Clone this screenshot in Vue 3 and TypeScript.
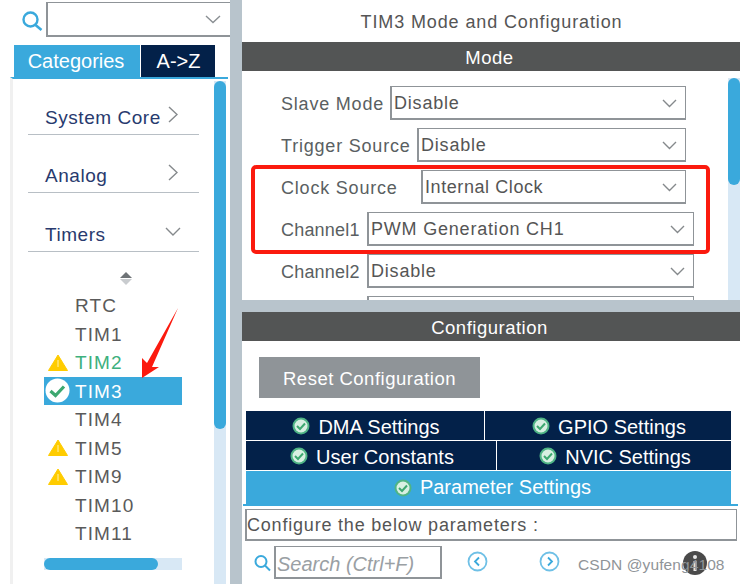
<script setup lang="ts">
interface Item { name: string; icon?: 'warn' | 'check'; cls?: string }
const cats = [
  { name: 'System Core', open: false },
  { name: 'Analog', open: false },
  { name: 'Timers', open: true },
]
const items: Item[] = [
  { name: 'RTC' },
  { name: 'TIM1' },
  { name: 'TIM2', icon: 'warn', cls: 'green' },
  { name: 'TIM3', icon: 'check', cls: 'picked' },
  { name: 'TIM4' },
  { name: 'TIM5', icon: 'warn' },
  { name: 'TIM9', icon: 'warn' },
  { name: 'TIM10' },
  { name: 'TIM11' },
]
const rows = [
  { label: 'Slave Mode', value: 'Disable', cls: 'r-slave' },
  { label: 'Trigger Source', value: 'Disable', cls: 'r-trig' },
  { label: 'Clock Source', value: 'Internal Clock', cls: 'r-clock' },
  { label: 'Channel1', value: 'PWM Generation CH1', cls: 'r-ch' },
  { label: 'Channel2', value: 'Disable', cls: 'r-ch' },
  { label: '', value: '', cls: 'r-ch' },
]
</script>

<template>
  <div class="app">
    <aside class="left">
      <div class="searchbar">
        <svg class="lens" width="22" height="22" viewBox="0 0 22 22">
          <circle cx="9.5" cy="9.5" r="7" fill="none" stroke="#3aa9dc" stroke-width="2.4" />
          <path d="M14.5 15l6 5" stroke="#3aa9dc" stroke-width="2.6" fill="none" />
        </svg>
        <div class="combo">
          <svg width="16" height="9" viewBox="0 0 16 9"><path d="M1 1l7 6.500L15 1" fill="none" stroke="#8a8f93" stroke-width="1.4" /></svg>
        </div>
      </div>
      <div class="tabs">
        <div class="tab on">Categories</div>
        <div class="tab off">A-&gt;Z</div>
      </div>
      <div class="panel">
        <div class="panel-main">
          <div v-for="c in cats" :key="c.name" class="cat">
            <span>{{ c.name }}</span>
            <svg v-if="c.open" class="cat-down" width="16" height="10" viewBox="0 0 16 10"><path d="M1 1l7 7 7-7" fill="none" stroke="#85898c" stroke-width="1.4" /></svg>
            <svg v-else class="cat-right" width="10" height="17" viewBox="0 0 10 17"><path d="M1 1l8 7.500-8 7.500" fill="none" stroke="#85898c" stroke-width="1.4" /></svg>
          </div>
          <div class="updown"><i class="up"></i><i class="down"></i></div>
          <div class="list">
            <div v-for="it in items" :key="it.name" class="item" :class="it.cls">
              <span class="ic">
                <svg v-if="it.icon === 'warn'" width="20" height="17" viewBox="0 0 20 17">
                  <path d="M10 1L19.500 16.500H0.500Z" fill="#ffcc00" stroke="#ffcc00" stroke-linejoin="round" />
                  <path d="M10 6v7" stroke="#fff3b0" stroke-width="1" />
                </svg>
                <svg v-else-if="it.icon === 'check'" width="25" height="25" viewBox="0 0 25 25">
                  <circle cx="12.500" cy="12.500" r="12" fill="#fff" />
                  <path d="M5.500 13l5 4.500 8.500-9" fill="none" stroke="#3da870" stroke-width="3.200" />
                </svg>
              </span>
              <span class="item-name">{{ it.name }}</span>
            </div>
          </div>
          <div class="hbar"><div class="hthumb"></div></div>
        </div>
        <div class="vtrack"><div class="vthumb"></div></div>
      </div>
    </aside>

    <main class="right">
      <section class="top">
        <h1 class="title">TIM3 Mode and Configuration</h1>
        <div class="bar">Mode</div>
        <div class="mode">
          <div class="form">
            <div v-for="(r, i) in rows" :key="i" class="row" :class="r.cls">
              <span class="lbl">{{ r.label }}</span>
              <div class="sel">
                <span>{{ r.value }}</span>
                <svg width="15" height="9" viewBox="0 0 15 9"><path d="M1 1l6.500 6.500L14 1" fill="none" stroke="#85898c" stroke-width="1.4" /></svg>
              </div>
            </div>
          </div>
          <div class="mtrack"><div class="mthumb"></div></div>
        </div>
      </section>
      <section class="bottom">
        <div class="bar">Configuration</div>
        <button class="reset">Reset Configuration</button>
        <div class="ctabs">
          <div class="crow c1">
            <div class="ctab"><svg class="ok" viewBox="0 0 18 18"><circle cx="9" cy="9" r="8.500" fill="#4fb485"/><circle cx="9" cy="9" r="6.500" fill="#d8f0e2"/><path d="M5 9l3 3 5-5.500" fill="none" stroke="#3da870" stroke-width="2"/></svg>DMA Settings</div>
            <div class="ctab"><svg class="ok" viewBox="0 0 18 18"><circle cx="9" cy="9" r="8.500" fill="#4fb485"/><circle cx="9" cy="9" r="6.500" fill="#d8f0e2"/><path d="M5 9l3 3 5-5.500" fill="none" stroke="#3da870" stroke-width="2"/></svg>GPIO Settings</div>
          </div>
          <div class="crow c2">
            <div class="ctab"><svg class="ok" viewBox="0 0 18 18"><circle cx="9" cy="9" r="8.500" fill="#4fb485"/><circle cx="9" cy="9" r="6.500" fill="#d8f0e2"/><path d="M5 9l3 3 5-5.500" fill="none" stroke="#3da870" stroke-width="2"/></svg>User Constants</div>
            <div class="ctab"><svg class="ok" viewBox="0 0 18 18"><circle cx="9" cy="9" r="8.500" fill="#4fb485"/><circle cx="9" cy="9" r="6.500" fill="#d8f0e2"/><path d="M5 9l3 3 5-5.500" fill="none" stroke="#3da870" stroke-width="2"/></svg>NVIC Settings</div>
          </div>
          <div class="ctab param"><svg class="ok" viewBox="0 0 18 18"><circle cx="9" cy="9" r="8.500" fill="#4fb485"/><circle cx="9" cy="9" r="6.500" fill="#d8f0e2"/><path d="M5 9l3 3 5-5.500" fill="none" stroke="#3da870" stroke-width="2"/></svg>Parameter Settings</div>
        </div>
        <div class="cline"></div>
        <div class="configure">Configure the below parameters :</div>
        <div class="tools">
          <svg width="17" height="18" viewBox="0 0 17 18"><circle cx="7" cy="7.500" r="5.500" fill="none" stroke="#3aa9dc" stroke-width="2"/><path d="M11 11.500l5 5" stroke="#3aa9dc" stroke-width="2"/></svg>
          <div class="search">Search (Ctrl+F)</div>
          <svg class="nav n1" width="21" height="21" viewBox="0 0 21 21"><circle cx="10.500" cy="10.500" r="9" fill="none" stroke="#6fc0e6" stroke-width="1.800"/><path d="M12 6.500l-4 4 4 4" fill="none" stroke="#3aa9dc" stroke-width="1.800"/></svg>
          <svg class="nav n2" width="21" height="21" viewBox="0 0 21 21"><circle cx="10.500" cy="10.500" r="9" fill="none" stroke="#6fc0e6" stroke-width="1.800"/><path d="M9 6.500l4 4-4 4" fill="none" stroke="#3aa9dc" stroke-width="1.800"/></svg>
        </div>
      </section>
    </main>

    <div class="redbox"></div>
    <svg class="arrow" width="42" height="74" viewBox="0 0 42 74">
      <path d="M38 1L12 60H19L2 71V51L7 56Z" fill="#fb1a0e" />
    </svg>
    <svg class="wm-dot" width="24" height="24" viewBox="0 0 24 24">
      <circle cx="12" cy="12" r="12" fill="#4a4a4a" />
      <circle cx="12" cy="6" r="2" fill="#e8e8e8" />
      <rect x="10.500" y="10" width="3" height="10" fill="#e8e8e8" />
    </svg>
    <div class="wm">CSDN @yufeng4108</div>
  </div>
</template>

<style>
html, body { margin: 0; background: #fff; }
</style>

<style scoped>
.app {
  position: relative;
  width: 740px;
  height: 584px;
  overflow: hidden;
  display: flex;
  background: #b8c4cc;
  font-family: "Liberation Sans", Arial, sans-serif;
  color: #5a5a5a;
}
.left {
  width: 230px;
  height: 584px;
  background: #fff;
  display: flex;
  flex-direction: column;
  flex: none;
}
.searchbar { height: 45px; display: flex; padding: 2px 0 0 21px; box-sizing: border-box; flex: none; }
.lens { margin-top: 8px; }
.combo {
  width: 184px; height: 35px; margin-left: 3px; box-sizing: border-box;
  border: 1px solid #8f9498; border-width: 1px 0 2px 2px;
  display: flex; align-items: center; justify-content: flex-end; padding-right: 9px;
}
.tabs { display: flex; height: 32px; margin-left: 14px; flex: none; }
.tab { height: 32px; line-height: 32px; text-align: center; font-size: 20px; color: #fff; box-sizing: border-box; }
.tab.on { width: 126px; background: #3aa9dc; padding-right: 2px; }
.tab.off { width: 74px; margin-left: 1px; background: #032149; padding-left: 1px; }
.panel {
  flex: 1; display: flex; margin-left: 10px; margin-right: 2px; min-height: 0;
  border-top: 2px solid #3aa9dc; border-left: 3px solid #f0f0f0; padding-top: 2px; position: relative;
}
.panel-main { width: 201px; flex: none; position: relative; }
.vtrack { width: 12px; background: #d8e8f5; }
.vthumb { height: 348px; background: #3aa9dc; border-radius: 6px; }
.cat {
  margin: 0 15px; height: 58px; box-sizing: border-box; border-bottom: 1px solid #b8bfc5;
  color: #283a6e; font-size: 19px; letter-spacing: .55px; position: relative;
  display: flex; align-items: flex-end; padding: 0 0 5px 17px;
}
.cat:nth-child(1) { height: 54px; }
.cat:nth-child(3) { height: 59px; }
.cat-right { position: absolute; left: 140px; bottom: 11px; }
.cat-down { position: absolute; left: 137px; bottom: 14px; }
.updown { height: 15px; margin: 20px 0 4px; display: flex; flex-direction: column; align-items: center; width: 226px; gap: 1px; }
.up { width: 0; height: 0; border: 6px solid transparent; border-top: 0; border-bottom: 6px solid #6e7376; }
.down { width: 0; height: 0; border: 6px solid transparent; border-bottom: 0; border-top: 6px solid #c9cccf; }
.list { margin-left: 31px; width: 138px; }
.item {
  height: 28.500px; display: flex; align-items: center; font-size: 19px; letter-spacing: 1.100px;
}
.item-name { padding-top: 2px; }
.ic { width: 31px; flex: none; display: flex; justify-content: center; }
.item .ic svg { margin-left: -4px; }
.item.green { color: #3db07d; }
.item.picked { background: #3aa9dc; color: #fff; }
.hbar { margin: 10px 0 0 31px; width: 138px; height: 12px; background: #d8e8f5; }
.hthumb { width: 114px; height: 12px; border-radius: 6px; background: #3aa9dc; }

.right { width: 498px; margin-left: 12px; display: flex; flex-direction: column; flex: none; gap: 12px; }
.top { height: 300px; background: #fff; display: flex; flex-direction: column; overflow: hidden; flex: none; }
.title { margin: 0; height: 42px; line-height: 44px; text-align: center; font-size: 18px; font-weight: 400; letter-spacing: .88px; color: #555; padding-left: 1px; }
.bar { height: 29px; line-height: 31px; background: #535555; color: #fff; text-align: center; font-size: 18.500px; flex: none; letter-spacing: .5px; padding-right: 3px; box-sizing: border-box; }
.mode { flex: 1; display: flex; position: relative; min-height: 0; }
.form { flex: 1; padding: 15px 0 0 39px; display: flex; flex-direction: column; gap: 8px; }
.row { display: flex; height: 34px; align-items: center; font-size: 18px; letter-spacing: .8px; flex: none; }
.lbl { flex: none; white-space: nowrap; color: #5a5f62; padding-top: 2px; }
.sel {
  box-sizing: border-box; height: 34px; border: 1px solid #8f9498; border-left-width: 2px; border-bottom-width: 2px;
  display: flex; align-items: center; justify-content: space-between; padding: 2px 8px 0 2px; color: #555;
}
.r-slave .lbl { width: 109px; } .r-slave .sel { width: 296px; }
.r-trig .lbl { width: 136px; } .r-trig .sel { width: 269px; }
.r-clock .lbl { width: 140px; } .r-clock .sel { width: 265px; }
.r-ch .lbl { width: 86px; letter-spacing: .2px; } .r-ch .sel { width: 327px; }
.r-clock .sel > span { letter-spacing: .58px; }
.mtrack { position: absolute; right: 0; top: 7px; bottom: 0; width: 12px; background: #d8e8f5; }
.mthumb { height: 107px; background: #3aa9dc; border-radius: 6px; }

.bottom { flex: 1; background: #fff; display: flex; flex-direction: column; min-height: 0; }
.reset {
  margin: 16px 0 0 17px; width: 221px; height: 41px; border: 0; background: #8f9498; color: #fff;
  font: 18.500px "Liberation Sans", Arial, sans-serif; letter-spacing: .5px; padding: 2px 0 0; flex: none;
}
.ctabs { margin: 13px 0 0 4px; width: 485px; display: flex; flex-direction: column; gap: 1px; }
.crow { display: flex; gap: 1px; height: 29px; }
.ctab {
  background: #032149; color: #fff; font-size: 20px; display: flex; align-items: center; justify-content: center; height: 29px; padding-top: 3px; box-sizing: border-box;
}
.c1 .ctab:first-child { width: 238px; } .c1 .ctab:last-child { width: 246px; }
.c2 .ctab:first-child { width: 250px; } .c2 .ctab:last-child { width: 234px; }
.ok { width: 18px; height: 18px; margin: -3px 10px 0 0; flex: none; position: relative; left: 2px; }
.ctab.param { background: #3aa9dc; height: 33px; padding-left: 6px; padding-top: 0; }
.ctab.param .ok { margin-top: 0; }
.cline { margin: 0 0 0 1px; width: 495px; height: 2px; background: #3aa9dc; flex: none; }
.configure {
  margin: 3px 0 0 3px; width: 492px; height: 32px; box-sizing: border-box; border: 1px solid #8f9498; border-width: 1px 1px 2px 2px;
  font-size: 18px; letter-spacing: .8px; line-height: 30px; white-space: nowrap; color: #555; flex: none;
}
.tools { display: flex; align-items: center; padding: 5px 0 0 12px; height: 33px; position: relative; }
.search {
  box-sizing: border-box; margin-left: 3px; width: 168px; height: 33px; border: 2px solid #8f9498; border-width: 1px 2px 2px 2px;
  color: #9aa0a4; font-style: italic; font-size: 20px; line-height: 35px; padding-left: 1px;
}
.nav { position: absolute; top: 10px; }
.n1 { left: 225px; } .n2 { left: 297px; }

.redbox {
  position: absolute; left: 251px; top: 165px; width: 459px; height: 89px; box-sizing: border-box;
  border: 4px solid #fb1a0e; border-radius: 5px;
}
.arrow { position: absolute; left: 140px; top: 307px; }
.wm-dot { position: absolute; left: 683px; top: 551px; }
.wm { position: absolute; left: 578px; top: 556px; font-size: 15.500px; color: #8f9498; white-space: nowrap; letter-spacing: .1px; }
</style>
